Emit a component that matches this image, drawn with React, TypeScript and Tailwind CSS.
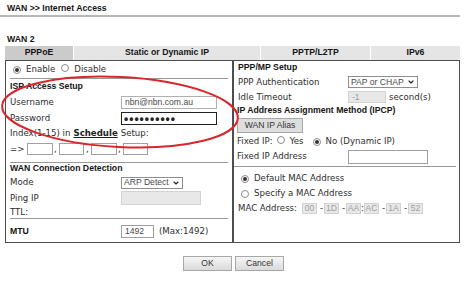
import { ChevronDown } from "lucide-react"

const verdana = "font-['DejaVu_Sans',sans-serif] text-[8.6px] text-[#2e2e2e]"
const arialBold = "font-['Liberation_Sans',Arial,sans-serif] font-bold text-[8.7px] text-[#141414]"
const arial = "font-['Liberation_Sans',Arial,sans-serif] text-[8.6px] text-[#4a4a4a]"

const Radio = ({ on }: { on?: boolean }) => (
    <span className="inline-flex w-[8px] h-[8px] rounded-full border border-[#8c8c8c] bg-white items-center justify-center shrink-0">
        {on && <span className="w-[4px] h-[4px] rounded-full bg-[#333]" />}
    </span>
)

const Select = ({ label, w }: { label: string; w: string }) => (
    <div className={`${w} h-[12px] border border-[#8f8f8f] bg-white flex items-center justify-between pl-[2px] pr-[2px] ${arial}`}>
        <span className="leading-none">{label}</span>
        <ChevronDown size={8} strokeWidth={3.5} className="text-[#222]" />
    </div>
)

export default function App() {
    return (
        <div className="relative w-[474px] h-[295px] bg-white overflow-hidden">
            {/* header */}
            <div className={`h-[15px] pt-[2px] pl-[7px] flex items-center ${arialBold}`}>
                WAN &gt;&gt; Internet Access
            </div>
            <div className="w-[460px] h-[2px] bg-[#b8b8b8]" />

            <div className={`mt-[16px] h-[13px] pl-[7px] flex items-center ${arialBold}`}>WAN 2</div>

            {/* tabs */}
            <div className="ml-[5px] flex gap-[1px] h-[14px]">
                <div className={`w-[68px] bg-[#cbcbcb] flex items-center justify-center ${arialBold}`}>PPPoE</div>
                <div className={`w-[186px] bg-[#e5e5e5] flex items-center justify-center ${arialBold}`}>Static or Dynamic IP</div>
                <div className={`w-[109px] bg-[#e5e5e5] flex items-center justify-center ${arialBold}`}>PPTP/L2TP</div>
                <div className={`w-[89px] bg-[#e5e5e5] flex items-center justify-center ${arialBold}`}>IPv6</div>
            </div>

            <div className="ml-[5px] flex">
                {/* left panel */}
                <div className={`w-[228px] h-[183px] border border-[#4e4e4e] flex flex-col ${verdana}`}>
                    <div className="mx-[4px] h-[18px] flex items-center border-b border-[#9a9a9a] pl-[3px]">
                        <Radio on />
                        <span className="ml-[5px]">Enable</span>
                        <span className="ml-[6px]"><Radio /></span>
                        <span className="ml-[5px]">Disable</span>
                    </div>
                    <div className="mx-[4px] flex flex-col">
                        <div className={`h-[16px] flex items-center ${arialBold}`}>ISP Access Setup</div>
                        <div className="h-[15px] flex items-center">
                            <span className="w-[111px]">Username</span>
                            <div className={`w-[96px] h-[13px] border border-[#b0b0b0] bg-white flex items-center pl-[3px] ${arial}`}>nbn@nbn.com.au</div>
                        </div>
                        <div className="h-[17px] flex items-center">
                            <span className="w-[111px]">Password</span>
                            <div className="w-[96px] h-[13px] border border-[#222] bg-white flex items-center pl-[2px] font-['Liberation_Sans',Arial,sans-serif] font-bold text-[12px] leading-none tracking-[1px] text-[#222]">
                                ••••••••••
                            </div>
                        </div>
                        <div className="h-[13px] flex items-center">
                            Index(1-15) in <span className="mx-[3px] font-bold underline text-[#222]">Schedule</span> Setup:
                        </div>
                        <div className="h-[18px] flex items-center">
                            <span className="w-[17px]">=&gt;</span>
                            <div className="w-[26px] h-[12px] border border-[#a0a0a0] bg-white" />
                            <span className="w-[6px] pl-[1px]">,</span>
                            <div className="w-[25px] h-[12px] border border-[#a0a0a0] bg-white" />
                            <span className="w-[7px] pl-[2px]">,</span>
                            <div className="w-[26px] h-[12px] border border-[#a0a0a0] bg-white" />
                            <span className="w-[6px] pl-[1px]">,</span>
                            <div className="w-[25px] h-[12px] border border-[#a0a0a0] bg-white" />
                        </div>
                        <div className="h-[5px] border-b border-[#9a9a9a]" />
                        <div className={`h-[12px] flex items-center ${arialBold}`}>WAN Connection Detection</div>
                        <div className="h-[15px] flex items-center">
                            <span className="w-[111px]">Mode</span>
                            <Select label="ARP Detect" w="w-[62px]" />
                        </div>
                        <div className="h-[16px] flex items-center">
                            <span className="w-[111px]">Ping IP</span>
                            <div className="w-[80px] h-[14px] border border-[#d2d2d2] bg-[#e8e8e8]" />
                        </div>
                        <div className="h-[13px] flex items-center border-b border-[#9a9a9a]">TTL:</div>
                    </div>
                    <div className="mx-[4px] flex-1 flex items-center pt-[2px]">
                        <span className={`w-[111px] ${arialBold}`}>MTU</span>
                        <div className={`w-[33px] h-[13px] border border-[#a0a0a0] bg-white flex items-center pl-[3px] ${arial}`}>1492</div>
                        <span className="ml-[5px]">(Max:1492)</span>
                    </div>
                </div>

                {/* right panel */}
                <div className={`w-[227px] h-[183px] border border-[#4e4e4e] flex flex-col ${verdana}`}>
                    <div className="pl-[4px] flex flex-col">
                        <div className={`h-[13px] flex items-center ${arialBold}`}>PPP/MP Setup</div>
                        <div className="h-[16px] flex items-center">
                            <span className="w-[110px]">PPP Authentication</span>
                            <Select label="PAP or CHAP" w="w-[70px]" />
                        </div>
                        <div className="h-[14px] flex items-center">
                            <span className="w-[110px]">Idle Timeout</span>
                            <div className={`w-[38px] h-[12px] border border-[#d2d2d2] bg-[#e8e8e8] flex items-center pl-[3px] ${arial} text-[#9a9a9a]`}>-1</div>
                            <span className="ml-[3px]">second(s)</span>
                        </div>
                        <div className={`h-[14px] -ml-[1px] flex items-center ${arialBold}`}>IP Address Assignment Method (IPCP)</div>
                        <div className="h-[16px] -ml-[1px] flex items-start">
                            <div className={`w-[66px] h-[15px] border border-[#a8a8a8] bg-[#dedede] flex items-center justify-center ${arial} text-[#333]`}>WAN IP Alias</div>
                        </div>
                        <div className="h-[15px] -ml-[1px] flex items-center">
                            <span>Fixed IP:</span>
                            <span className="ml-[4px]"><Radio /></span>
                            <span className="ml-[5px]">Yes</span>
                            <span className="ml-[9px]"><Radio on /></span>
                            <span className="ml-[5px]">No (Dynamic IP)</span>
                        </div>
                        <div className="h-[15px] -ml-[1px] flex items-center">
                            <span className="w-[111px]">Fixed IP Address</span>
                            <div className="w-[80px] h-[14px] border border-[#a0a0a0] bg-white" />
                        </div>
                    </div>
                    <div className="h-[3px] mr-[3px] border-b border-[#9a9a9a]" />
                    <div className="pl-[4px] pt-[4px] flex flex-col">
                        <div className="h-[15px] flex items-center pl-[3px]">
                            <Radio on />
                            <span className="ml-[5px]">Default MAC Address</span>
                        </div>
                        <div className="h-[15px] flex items-center pl-[3px]">
                            <Radio />
                            <span className="ml-[5px]">Specify a MAC Address</span>
                        </div>
                        <div className="h-[15px] flex items-center">
                            <span className="w-[64px]">MAC Address:</span>
                            {["00", "1D", "AA", "AC", "1A", "52"].map((v, i) => (
                                <div key={v} className="flex items-center">
                                    {i > 0 && (
                                        <span className={i === 3 ? "w-[3px] text-center" : "w-[7px] text-right pr-[1px]"}>
                                            {i === 3 ? ":" : "-"}
                                        </span>
                                    )}
                                    <div className={`w-[15px] h-[11px] border border-[#d2d2d2] bg-[#e8e8e8] flex items-center justify-center ${arial} text-[#a0a0a0] text-[7.5px]`}>
                                        {v}
                                    </div>
                                </div>
                            ))}
                        </div>
                    </div>
                </div>
            </div>

            {/* buttons */}
            <div className="w-[467px] mt-[13px] flex justify-center gap-[3px]">
                <div className={`w-[49px] h-[15px] border border-[#a8a8a8] bg-gradient-to-b from-[#f6f6f6] to-[#dadada] flex items-center justify-center ${arial} text-[#333]`}>OK</div>
                <div className={`w-[49px] h-[15px] border border-[#a8a8a8] bg-gradient-to-b from-[#f6f6f6] to-[#dadada] flex items-center justify-center ${arial} text-[#333]`}>Cancel</div>
            </div>

            {/* red annotation */}
            <svg className="absolute top-0 left-0 pointer-events-none" width="474" height="295">
                <ellipse cx="120" cy="112" rx="118" ry="35" transform="rotate(3 120 112)" fill="none" stroke="#d8262c" strokeWidth="2" />
            </svg>
        </div>
    )
}
